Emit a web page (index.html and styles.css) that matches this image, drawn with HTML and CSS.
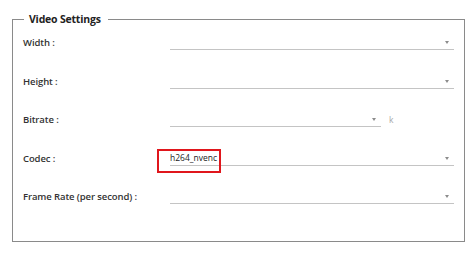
FILE: index.html
```html
<!DOCTYPE html>
<html lang="en-us">
  <head>
    <meta charset="utf-8">
    <meta name="viewport" content="width=device-width">
    <title>Video Settings</title>
    <link rel="stylesheet" href="styles.css">
  </head>
  <body>
    <form class="settings">
      <fieldset class="group">
        <legend class="group-title">Video Settings</legend>

        <div class="rows">
          <div class="row">
            <label class="label">Width :</label>
            <div class="field"><span class="value"></span><span class="arrow"></span></div>
          </div>

          <div class="row">
            <label class="label">Height :</label>
            <div class="field"><span class="value"></span><span class="arrow"></span></div>
          </div>

          <div class="row">
            <label class="label">Bitrate :</label>
            <div class="field short"><span class="value"></span><span class="arrow"></span></div>
            <span class="unit">k</span>
          </div>

          <div class="row">
            <label class="label">Codec :</label>
            <div class="field marked"><span class="value">h264_nvenc</span><span class="arrow"></span></div>
          </div>

          <div class="row">
            <label class="label">Frame Rate (per second) :</label>
            <div class="field"><span class="value"></span><span class="arrow"></span></div>
          </div>
        </div>
      </fieldset>
    </form>
  </body>
</html>
```

FILE: styles.css
```css
html, body {
    margin: 0;
    background: #fff;
}
body {
    font-family: "Open Sans", "Noto Sans", sans-serif;
    color: #333;
}
.settings {
    padding: 12px 9px 0 12px;
}
.group {
    margin: 0;
    padding: 0 10px 24px 10px;
    border: 1px solid #8a8a8a;
    min-width: 0;
}
.group-title {
    margin-left: 1px;
    padding: 0 7px 0 5px;
    font-size: 10.5px;
    font-weight: 700;
    letter-spacing: -0.2px;
    line-height: 15px;
    color: #222;
}
.rows {
    margin-top: -3px;
}
.row {
    display: flex;
    align-items: center;
    height: 38.5px;
}
.label {
    width: 147px;
    flex: none;
    font-size: 9.5px;
    font-weight: 600;
    letter-spacing: -0.1px;
    line-height: 14px;
    color: #333;
}
.field {
    position: relative;
    flex: 1;
    display: flex;
    align-items: center;
    height: 13px;
    border-bottom: 1px solid #c4c4c4;
}
.field.short {
    flex: none;
    width: 211px;
}
.value {
    flex: 1;
    font-size: 8.5px;
    line-height: 12px;
    color: #222;
}
.arrow {
    width: 0;
    height: 0;
    margin-right: 5px;
    border-left: 2.5px solid transparent;
    border-right: 2.5px solid transparent;
    border-top: 3px solid #8c8c8c;
}
.unit {
    margin-left: 8px;
    font-size: 8.5px;
    line-height: 12px;
    color: #a8a8a8;
}
.marked::after {
    content: "";
    position: absolute;
    left: -13px;
    top: -3px;
    width: 60px;
    height: 20px;
    border: 2px solid #e0161c;
}
```
